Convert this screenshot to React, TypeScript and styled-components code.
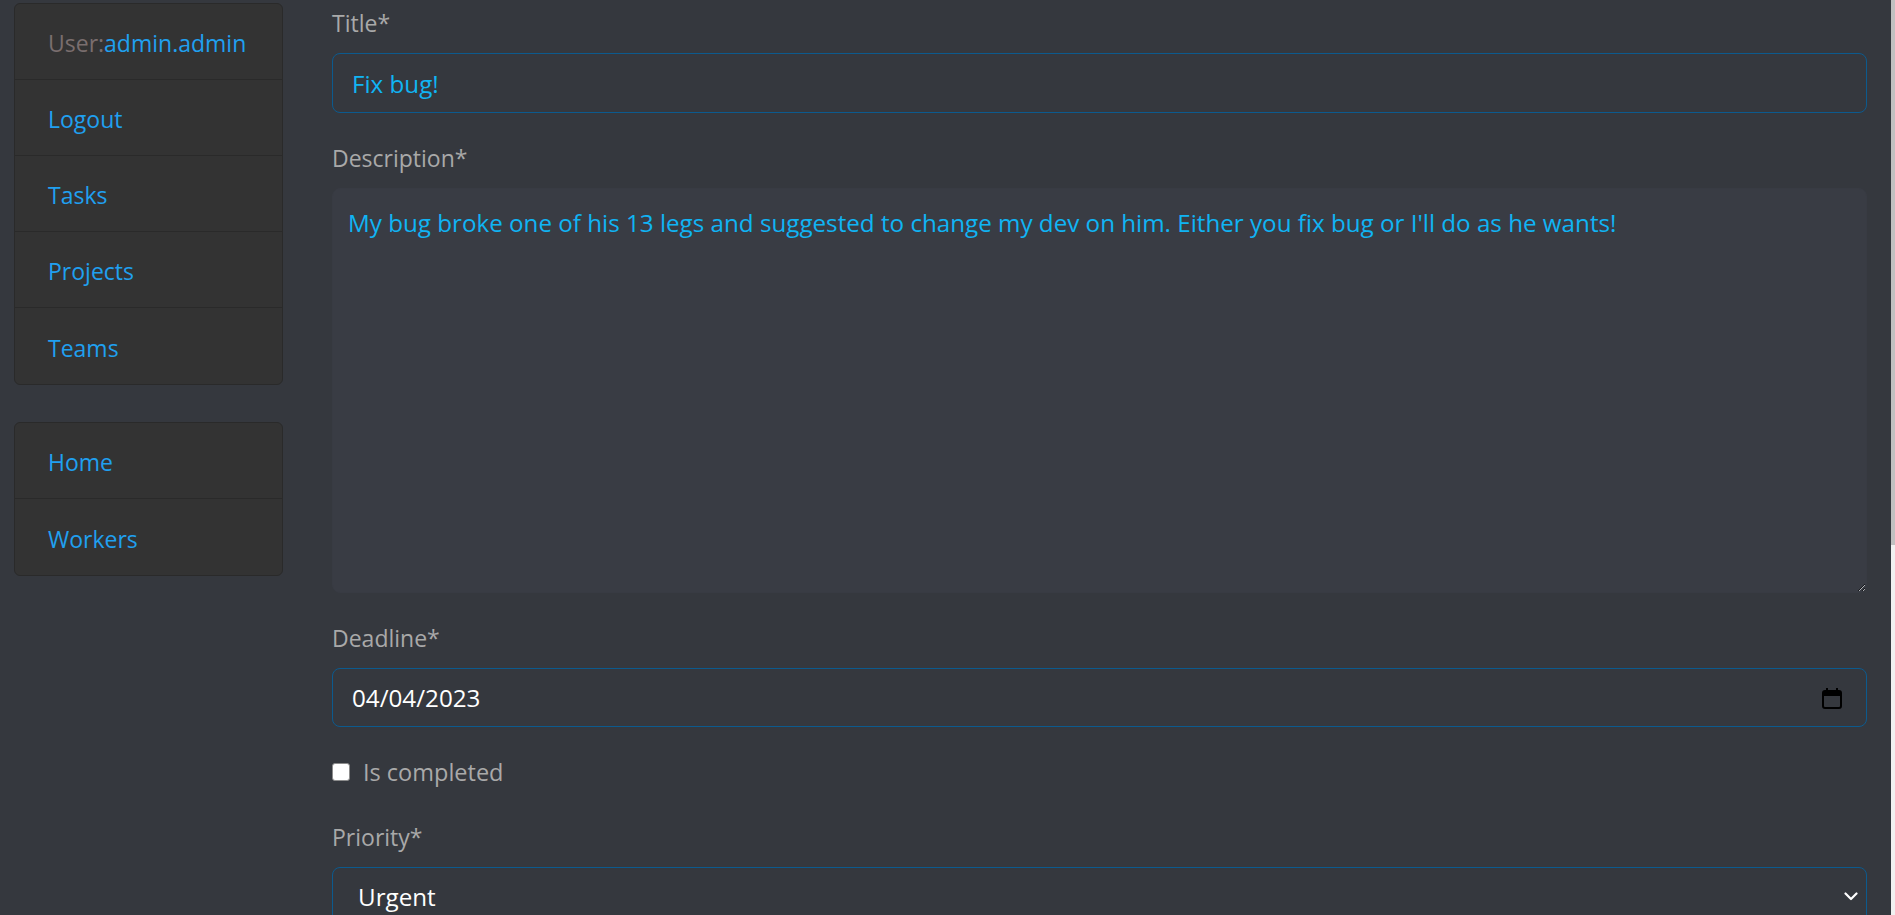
import React from 'react'
import styled, { createGlobalStyle } from 'styled-components'

const GlobalStyle = createGlobalStyle`
  html, body {
    margin: 0;
    padding: 0;
    background: #35383e;
  }
  body {
    font-family: "Open Sans", "Noto Sans", "DejaVu Sans", sans-serif;
    overflow: hidden;
  }
  * { box-sizing: border-box; }
`

const Page = styled.div`
  display: flex;
  height: 100vh;
  overflow: hidden;
`

const Layout = styled.div`
  flex: 1;
  display: flex;
  align-items: flex-start;
  gap: 49px;
  padding: 3px 24px 0 14px;
`

const ScrollTrack = styled.div`
  width: 4px;
  flex-shrink: 0;
  background: #f1f1f1;
  display: flex;
  flex-direction: column;
`

const ScrollThumb = styled.div`
  height: 545px;
  background: #c1c1c1;
`

const Sidebar = styled.nav`
  width: 269px;
  flex-shrink: 0;
  display: flex;
  flex-direction: column;
  gap: 37px;
`

const NavGroup = styled.ul`
  list-style: none;
  margin: 0;
  padding: 0;
  background: #333333;
  border: 1px solid #2a2a2a;
  border-radius: 6px;
  overflow: hidden;
`

const NavItem = styled.li`
  height: 76px;
  display: flex;
  align-items: center;
  padding: 3px 33px 0;
  font-size: 23px;
  border-bottom: 1px solid #2a2a2a;
  &:last-child {
    border-bottom: none;
  }
`

const NavLink = styled.a`
  color: #20a0f0;
  text-decoration: none;
`

const UserLabel = styled.span`
  color: #7a6e6e;
`

const Form = styled.form`
  flex: 1;
  display: flex;
  flex-direction: column;
  padding-top: 3px;
`

const Field = styled.div`
  display: flex;
  flex-direction: column;
  margin-bottom: 28px;
`

const Label = styled.label`
  color: #a9a9a9;
  font-size: 23px;
  line-height: 34px;
  margin-bottom: 13px;
`

const TextInput = styled.input`
  height: 60px;
  width: 100%;
  background: transparent;
  border: 1px solid #0c5a8e;
  border-radius: 8px;
  padding: 0 19px;
  color: #10b4f4;
  font-family: inherit;
  font-size: 24.2px;
  outline: none;
`

const TextArea = styled.textarea`
  height: 405px;
  width: 100%;
  background: #393c44;
  border: 1px solid #383b43;
  border-radius: 8px;
  padding: 16px 15px;
  color: #10b4f4;
  font-family: inherit;
  font-size: 24.2px;
  line-height: 36px;
  resize: vertical;
  outline: none;
`

const PickerBox = styled.div<{ select?: boolean }>`
  height: 59px;
  display: flex;
  align-items: center;
  justify-content: space-between;
  border: 1px solid #0c5a8e;
  border-radius: 8px;
  padding: ${p => (p.select ? '0 8px 0 25px' : '0 24px 0 19px')};
  color: #ffffff;
  font-size: 24.2px;
  line-height: 36px;
`

const CheckRow = styled.div`
  display: flex;
  align-items: center;
  gap: 13px;
  margin: 0 0 31px;
`

const CheckBox = styled.input`
  appearance: none;
  width: 18px;
  height: 18px;
  margin: 0;
  background: #ffffff;
  border: 1px solid #8c8c8c;
  border-radius: 3px;
`

const CheckLabel = styled.label`
  color: #a9a9a9;
  font-size: 23.5px;
  line-height: 34px;
`

const CalendarIcon = () => (
  <svg width="20" height="22" viewBox="0 0 20 22" fill="none">
    <rect x="1" y="4" width="18" height="17" rx="2" stroke="#000" strokeWidth="2" />
    <rect x="1" y="4" width="18" height="5" fill="#000" />
    <rect x="4" y="1" width="2" height="4" fill="#000" />
    <rect x="14" y="1" width="2" height="4" fill="#000" />
  </svg>
)

const ChevronIcon = () => (
  <svg width="14" height="9" viewBox="0 0 14 9" fill="none">
    <path d="M1.5 1.5 L7 7 L12.5 1.5" stroke="#fff" strokeWidth="2.2" strokeLinecap="round" strokeLinejoin="round" />
  </svg>
)

const topLinks = ['Logout', 'Tasks', 'Projects', 'Teams']
const bottomLinks = ['Home', 'Workers']

const App: React.FC = () => {
  return (
    <Page>
      <GlobalStyle />
      <Layout>
        <Sidebar>
          <NavGroup>
            <NavItem>
              <UserLabel>User:</UserLabel>
              <NavLink href="#">admin.admin</NavLink>
            </NavItem>
            {topLinks.map(l => (
              <NavItem key={l}>
                <NavLink href="#">{l}</NavLink>
              </NavItem>
            ))}
          </NavGroup>
          <NavGroup>
            {bottomLinks.map(l => (
              <NavItem key={l}>
                <NavLink href="#">{l}</NavLink>
              </NavItem>
            ))}
          </NavGroup>
        </Sidebar>

        <Form onSubmit={e => e.preventDefault()}>
          <Field>
            <Label htmlFor="title">Title*</Label>
            <TextInput id="title" defaultValue="Fix bug!" />
          </Field>
          <Field>
            <Label htmlFor="description">Description*</Label>
            <TextArea
              id="description"
              defaultValue="My bug broke one of his 13 legs and suggested to change my dev on him. Either you fix bug or I'll do as he wants!"
            />
          </Field>
          <Field>
            <Label>Deadline*</Label>
            <PickerBox>
              <span>04/04/2023</span>
              <CalendarIcon />
            </PickerBox>
          </Field>
          <CheckRow>
            <CheckBox type="checkbox" id="completed" />
            <CheckLabel htmlFor="completed">Is completed</CheckLabel>
          </CheckRow>
          <Field>
            <Label>Priority*</Label>
            <PickerBox select>
              <span>Urgent</span>
              <ChevronIcon />
            </PickerBox>
          </Field>
        </Form>
      </Layout>
      <ScrollTrack>
        <ScrollThumb />
      </ScrollTrack>
    </Page>
  )
}

export default App
